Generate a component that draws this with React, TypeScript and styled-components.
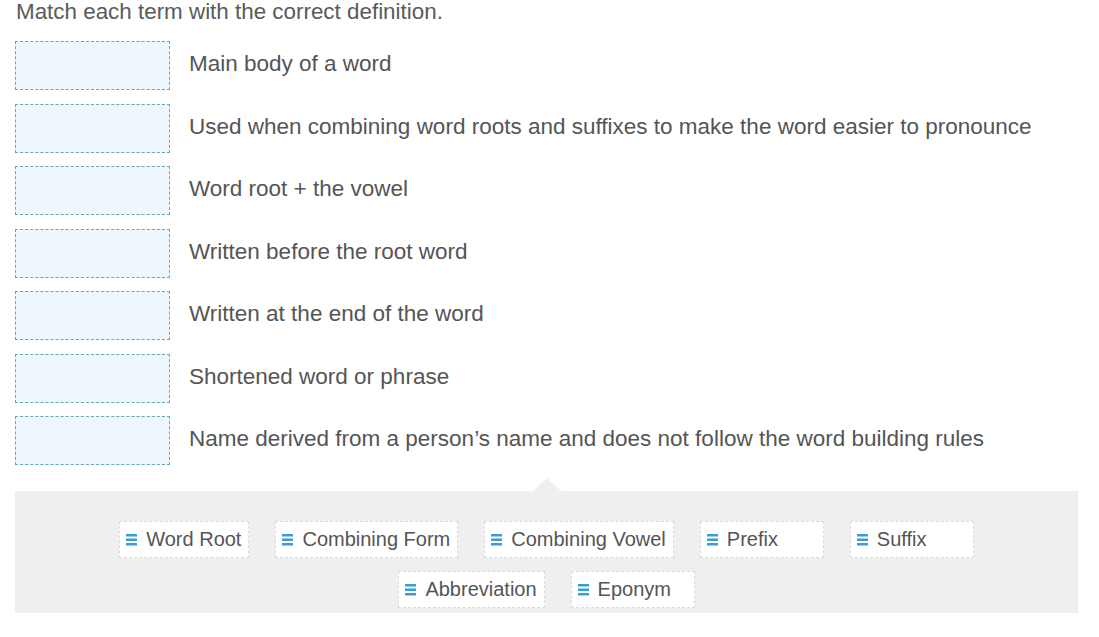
import styled, { createGlobalStyle } from 'styled-components'

const GlobalStyle = createGlobalStyle`
  body {
    margin: 0;
    background: #fff;
    font-family: "Liberation Sans", Arial, sans-serif;
    color: #555;
  }
`

const DEFINITIONS = [
  'Main body of a word',
  'Used when combining word roots and suffixes to make the word easier to pronounce',
  'Word root + the vowel',
  'Written before the root word',
  'Written at the end of the word',
  'Shortened word or phrase',
  'Name derived from a person’s name and does not follow the word building rules',
]

const TERMS = [
  'Word Root',
  'Combining Form',
  'Combining Vowel',
  'Prefix',
  'Suffix',
  'Abbreviation',
  'Eponym',
]

const Page = styled.div`
  padding: 0 21px 0 15px;
`

const Title = styled.p`
  margin: 0 0 0 1px;
  font-size: 22.4px;
  line-height: 24px;
  color: #5a5a5a;
`

const List = styled.div`
  display: flex;
  flex-direction: column;
  gap: 13.5px;
  margin-top: 17px;
`

const Row = styled.div`
  display: flex;
  align-items: center;
  gap: 19px;
`

const DropBox = styled.div`
  box-sizing: border-box;
  width: 155px;
  height: 49px;
  flex-shrink: 0;
  border: 1px dashed #68a8b3;
  background: #eef7fd;
`

const Definition = styled.span`
  font-size: 22.5px;
  color: #555;
  margin-top: -3px;
`

const Bank = styled.div`
  position: relative;
  margin-top: 26px;
  background: #efefef;
  padding: 30px 40px 5px;
  display: flex;
  flex-wrap: wrap;
  justify-content: center;
  column-gap: 26px;
  row-gap: 13px;

  &::before {
    content: '';
    position: absolute;
    top: -13px;
    left: 518px;
    border-left: 14px solid transparent;
    border-right: 14px solid transparent;
    border-bottom: 13px solid #efefef;
  }
`

const Chip = styled.div`
  box-sizing: border-box;
  height: 37px;
  min-width: 124px;
  display: flex;
  align-items: center;
  gap: 9px;
  padding: 0 7px 0 6px;
  background: #fff;
  border: 1px dashed #dadada;
  font-size: 20px;
  color: #555;
`

const Handle = () => (
  <svg width="11" height="13" viewBox="0 0 11 13">
    <rect x="0" y="1" width="11" height="2.5" fill="#3a9fd0" />
    <rect x="0" y="5.5" width="11" height="2.5" fill="#3a9fd0" />
    <rect x="0" y="10" width="11" height="2.5" fill="#3a9fd0" />
  </svg>
)

const App = () => (
  <>
    <GlobalStyle />
    <Page>
      <Title>Match each term with the correct definition.</Title>
      <List>
        {DEFINITIONS.map((d) => (
          <Row key={d}>
            <DropBox />
            <Definition>{d}</Definition>
          </Row>
        ))}
      </List>
      <Bank>
        {TERMS.map((t) => (
          <Chip key={t}>
            <Handle />
            {t}
          </Chip>
        ))}
      </Bank>
    </Page>
  </>
)

export default App
